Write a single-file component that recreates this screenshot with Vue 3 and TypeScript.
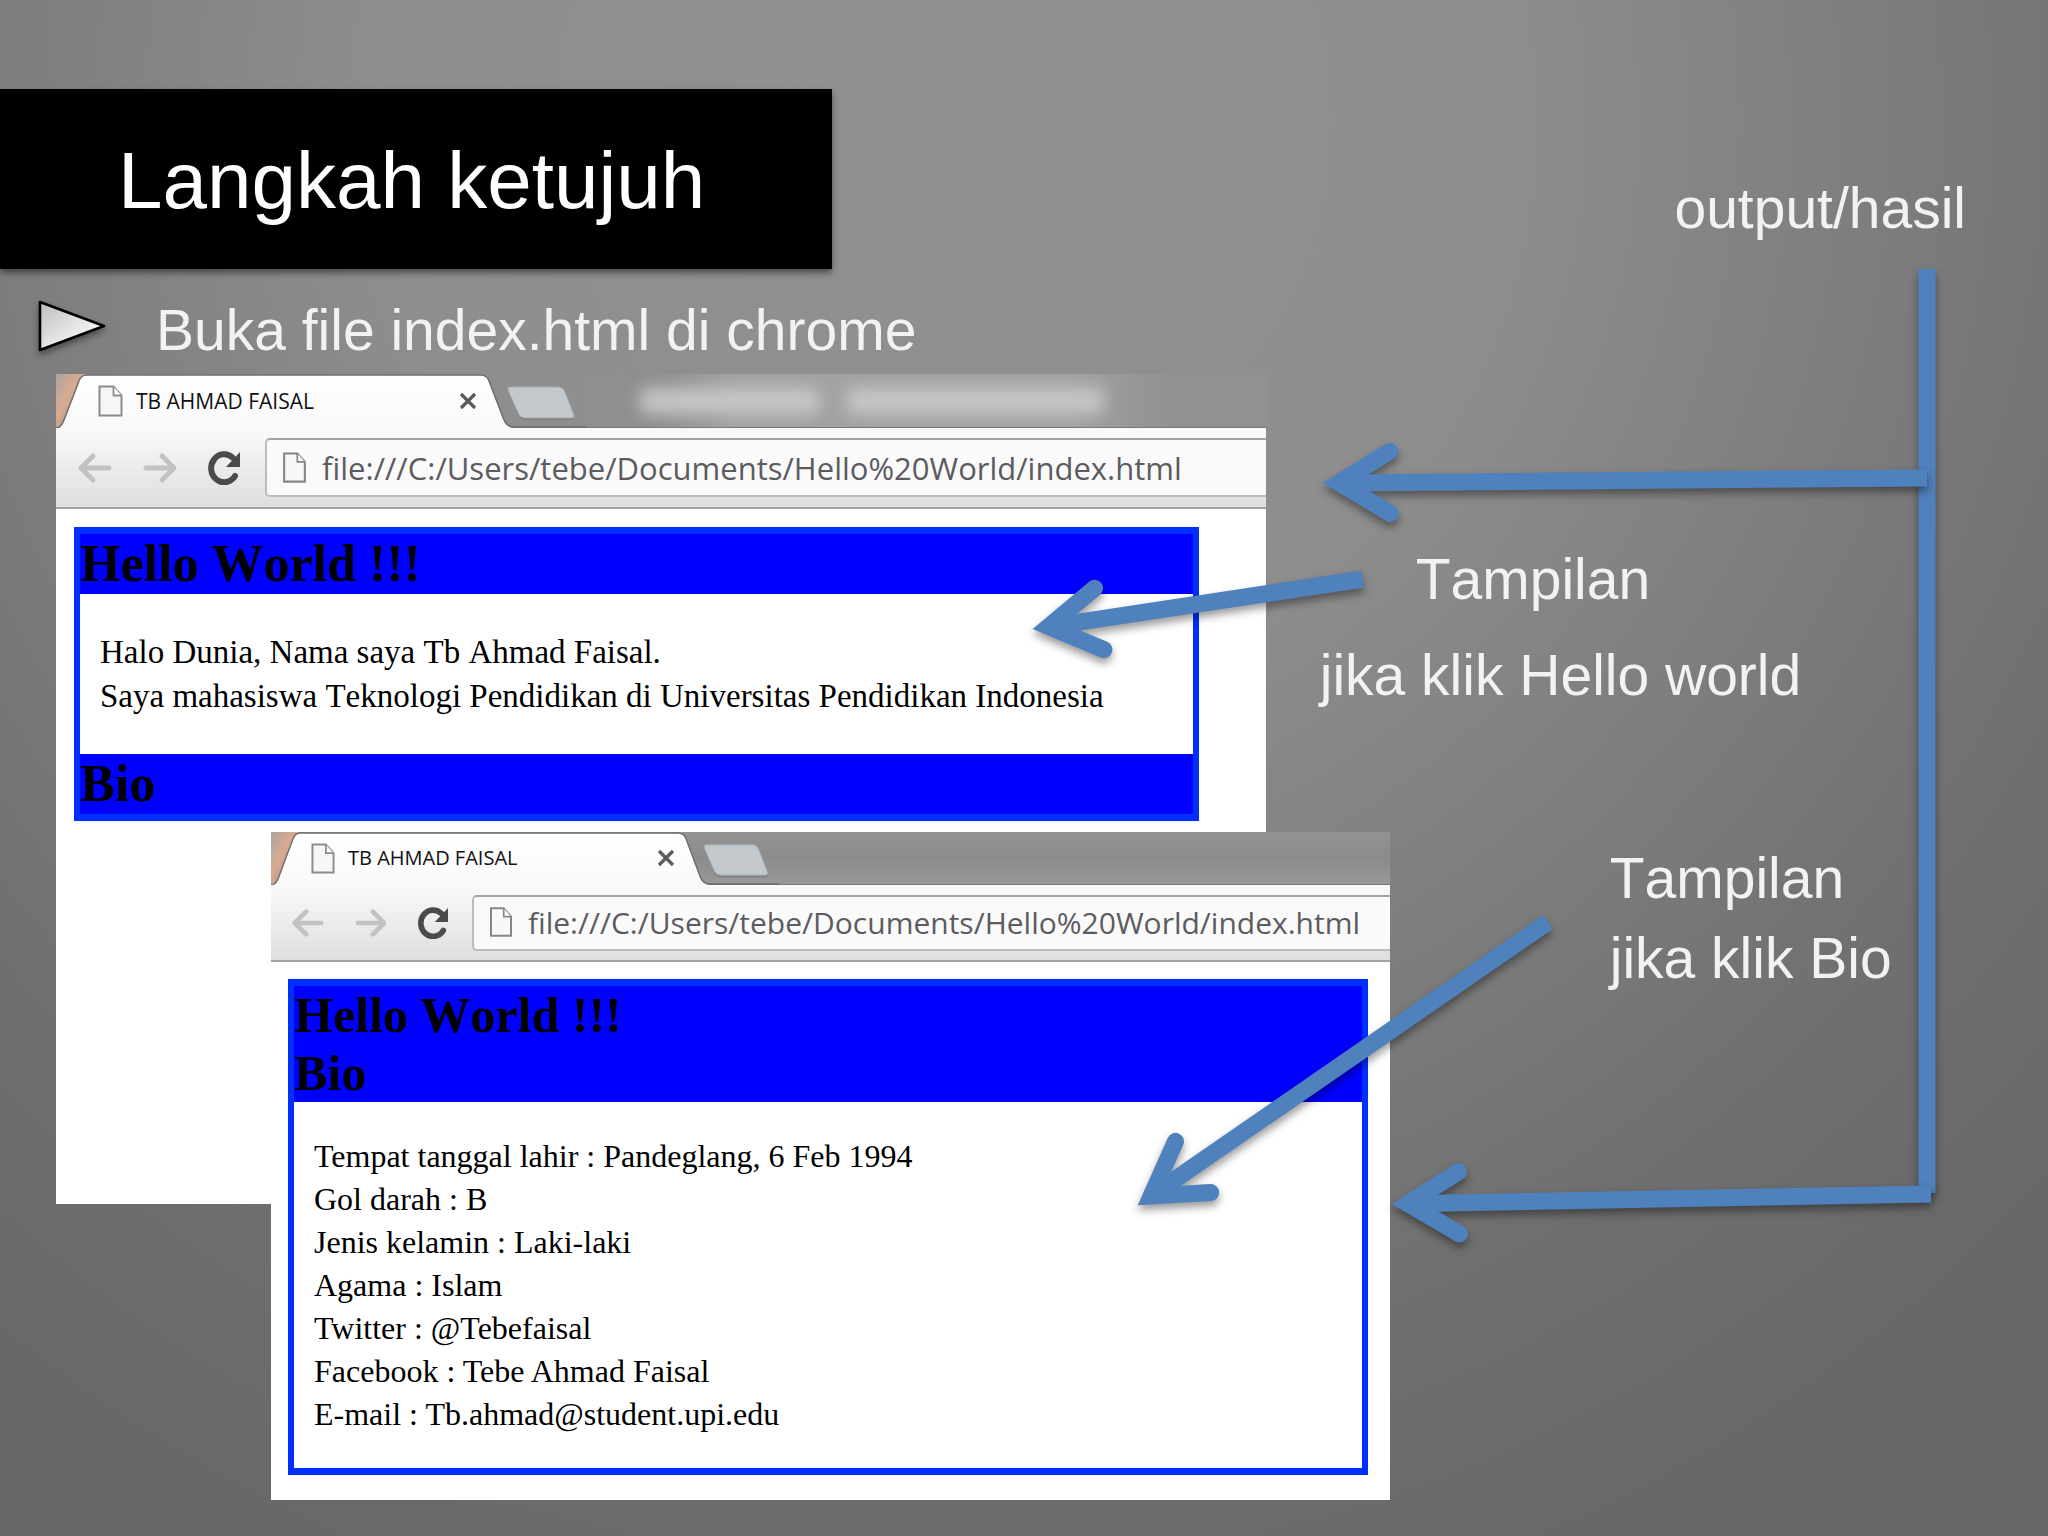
<script setup lang="ts">
interface Point { x: number; y: number }
interface Section { title: string; lines: string[] }
interface Shot { id: string; size: string; tabTitle: string; url: string; haze: boolean; sections: Section[] }

const shots: Shot[] = [
  {
    id: 'hello',
    size: 'large',
    tabTitle: 'TB AHMAD FAISAL',
    url: 'file:///C:/Users/tebe/Documents/Hello%20World/index.html',
    haze: true,
    sections: [
      {
        title: 'Hello World !!!',
        lines: [
          'Halo Dunia, Nama saya Tb Ahmad Faisal.',
          'Saya mahasiswa Teknologi Pendidikan di Universitas Pendidikan Indonesia',
        ],
      },
      { title: 'Bio', lines: [] },
    ],
  },
  {
    id: 'bio',
    size: 'small',
    tabTitle: 'TB AHMAD FAISAL',
    url: 'file:///C:/Users/tebe/Documents/Hello%20World/index.html',
    haze: false,
    sections: [
      { title: 'Hello World !!!', lines: [] },
      {
        title: 'Bio',
        lines: [
          'Tempat tanggal lahir : Pandeglang, 6 Feb 1994',
          'Gol darah : B',
          'Jenis kelamin : Laki-laki',
          'Agama : Islam',
          'Twitter : @Tebefaisal',
          'Facebook : Tebe Ahmad Faisal',
          'E-mail : Tb.ahmad@student.upi.edu',
        ],
      },
    ],
  },
]

// Builds the shaft and the open head of an arrow that points from `from` to `tip`.
function arrow(from: Point, tip: Point) {
  const length = Math.hypot(from.x - tip.x, from.y - tip.y)
  const dx = (from.x - tip.x) / length
  const dy = (from.y - tip.y) / length
  const at = (along: number, side: number) =>
    `${(tip.x + dx * along - dy * side).toFixed(1)} ${(tip.y + dy * along + dx * side).toFixed(1)}`
  return {
    shaft: `M${from.x} ${from.y} L${at(18, 0)}`,
    head: `M${at(67, 31)} L${at(16, 0)} L${at(67, -31)}`,
  }
}

const arrows = [
  arrow({ x: 1927, y: 478 }, { x: 1323, y: 483 }),
  arrow({ x: 1363, y: 579 }, { x: 1033, y: 629 }),
  arrow({ x: 1548, y: 922 }, { x: 1138, y: 1205 }),
  arrow({ x: 1931, y: 1194 }, { x: 1392, y: 1204 }),
]
</script>

<template>
  <main class="slide">
    <div class="main-column">
      <header class="banner">
        <h1>Langkah ketujuh</h1>
      </header>

      <div class="step">
        <svg class="bullet" viewBox="0 0 70 64" aria-hidden="true">
          <defs>
            <linearGradient id="bulletFill" x1="0" y1="0" x2="1" y2="1">
              <stop offset="0" stop-color="#bdbdbd" />
              <stop offset="0.6" stop-color="#ebebeb" />
              <stop offset="1" stop-color="#ffffff" />
            </linearGradient>
          </defs>
          <path d="M2 4 L66 28 L2 52 Z" fill="url(#bulletFill)" stroke="#000" stroke-width="2.6" stroke-linejoin="round" />
        </svg>
        <p>Buka file index.html di chrome</p>
      </div>

      <section v-for="shot in shots" :key="shot.id" class="window" :class="shot.size">
        <div class="strip">
          <svg class="tab-shape" viewBox="0 0 530 54" preserveAspectRatio="none" aria-hidden="true">
            <defs>
              <linearGradient :id="shot.id + 'Left'" x1="0" y1="0" x2="1" y2="1">
                <stop offset="0" stop-color="#a9a4a1" />
                <stop offset="0.4" stop-color="#d9ab90" />
                <stop offset="1" stop-color="#8f8181" />
              </linearGradient>
              <linearGradient :id="shot.id + 'Tab'" x1="0" y1="0" x2="0" y2="1">
                <stop offset="0" stop-color="#ffffff" />
                <stop offset="1" stop-color="#f9f9fa" />
              </linearGradient>
            </defs>
            <path d="M0 0 H30 L8 54 H0 Z" :fill="`url(#${shot.id}Left)`" />
            <path d="M0 54 Q5 54 8 46 L23 7 Q25 1 31 1 H424 Q431 1 433 7 L448 46 Q451 54 458 54 Z" :fill="`url(#${shot.id}Tab)`" />
            <path d="M0 54 Q5 54 8 46 L23 7 Q25 1 31 1 H424 Q431 1 433 7 L448 46 Q451 53 458 53 H530" fill="none" stroke="#6e6e70" stroke-width="1.5" />
            <path d="M454 14 H502 Q507 14 509 19 L518 43 Q519 46 515 46 H470 Q464 46 462 41 L452 17 Q451 14 454 14 Z" fill="#777" opacity="0.7" />
            <path d="M454 13 H502 Q507 13 509 18 L518 41 Q519 44 515 44 H470 Q464 44 462 39 L452 16 Q451 13 454 13 Z" fill="#c2c8cc" stroke="#a5a9ab" />
          </svg>
          <div class="tab">
            <svg class="page-icon" viewBox="0 0 25 32" aria-hidden="true">
              <path d="M1.5 1.5 H15.5 L23.5 10.5 V30.5 H1.5 Z" fill="#f6f6f7" stroke="#8b8b8d" stroke-width="2" />
              <path d="M15.5 1.5 V10.5 H23.5" fill="#fff" stroke="#8b8b8d" stroke-width="1.8" />
            </svg>
            <span class="tab-title">{{ shot.tabTitle }}</span>
            <button class="close" type="button" aria-label="Close tab">
              <svg viewBox="0 0 18 18" aria-hidden="true">
                <path d="M2 2 L16 16 M16 2 L2 16" stroke="#5b5b5b" stroke-width="3.2" />
              </svg>
            </button>
          </div>
          <div v-if="shot.haze" class="haze" aria-hidden="true"><i></i><i></i></div>
        </div>

        <div class="toolbar">
          <button type="button" aria-label="Back">
            <svg viewBox="0 0 34 34" aria-hidden="true">
              <path d="M15 5 L3 17 L15 29 M4 17 H31" fill="none" stroke="#c2c1c3" stroke-width="5" stroke-linecap="round" stroke-linejoin="round" />
            </svg>
          </button>
          <button type="button" aria-label="Forward">
            <svg viewBox="0 0 34 34" aria-hidden="true">
              <path d="M20 5 L32 17 L20 29 M31 17 H4" fill="none" stroke="#c2c1c3" stroke-width="5" stroke-linecap="round" stroke-linejoin="round" />
            </svg>
          </button>
          <button type="button" aria-label="Reload">
            <svg viewBox="0 0 34 34" aria-hidden="true">
              <path d="M29 25 A13 14 0 1 1 27 7" fill="none" stroke="#4b4b4d" stroke-width="6" stroke-linecap="round" />
              <path d="M34 1 V16 H20 Z" fill="#4b4b4d" />
            </svg>
          </button>
          <div class="address">
            <svg class="page-icon" viewBox="0 0 25 34" aria-hidden="true">
              <path d="M1.5 1.5 H15.5 L23.5 10.5 V31.5 H1.5 Z" fill="#f8f8f9" stroke="#858587" stroke-width="2.2" />
              <path d="M15.5 1.5 V10.5 H23.5" fill="#fff" stroke="#858587" stroke-width="1.8" />
            </svg>
            <input type="text" :value="shot.url" aria-label="Address" spellcheck="false" />
          </div>
        </div>

        <div class="page">
          <div class="accordion">
            <template v-for="section in shot.sections" :key="section.title">
              <h2><button type="button">{{ section.title }}</button></h2>
              <div v-if="section.lines.length" class="panel">
                <p v-for="line in section.lines" :key="line">{{ line }}</p>
              </div>
            </template>
          </div>
        </div>
      </section>
    </div>

    <aside class="notes">
      <p class="note result">output/hasil</p>
      <p class="note hello-note">Tampilan<br />jika klik Hello world</p>
      <p class="note bio-note">Tampilan<br />jika klik Bio</p>
    </aside>

    <svg class="arrows" viewBox="0 0 2048 1536" aria-hidden="true">
      <g class="line"><path d="M1927 269 V1193" /></g>
      <g v-for="(item, index) in arrows" :key="index" class="line">
        <path :d="item.shaft" />
        <path :d="item.head" stroke-linecap="round" stroke-linejoin="miter" />
      </g>
    </svg>
  </main>
</template>

<style>
body {
  margin: 0;
  background: #696869;
}
</style>

<style scoped>
.slide {
  position: relative;
  display: grid;
  grid-template-columns: 62fr 38fr;
  align-items: start;
  min-height: 100vh;
  box-sizing: border-box;
  overflow: hidden;
  background: radial-gradient(ellipse 68% 92% at 46% 8%, #909090 0%, #8e8e8e 40%, #7f7e7f 66%, #706f70 90%, #696869 110%);
  font-family: "Liberation Sans", Arial, sans-serif;
  font-kerning: none;
}

h1,
h2,
p {
  margin: 0;
}

button {
  padding: 0;
  border: 0;
  background: none;
  color: inherit;
  font: inherit;
  font-kerning: inherit;
  text-align: left;
}

svg {
  display: block;
}

.main-column {
  min-width: 0;
  padding: 89px 0 36px;
}

.banner {
  width: 65.5%;
  padding: 47px 0 43px 118px;
  box-sizing: border-box;
  background: #000;
  box-shadow: 0 4px 6px rgba(0, 0, 0, 0.45);
}

h1 {
  color: #fff;
  font-size: 80px;
  font-weight: 400;
  line-height: 90px;
  white-space: nowrap;
}

.step {
  display: flex;
  align-items: center;
  gap: 48px;
  margin: 29px 0 12px 38px;
}

.step p,
.note {
  color: #f3f2f3;
  font-size: 57px;
  line-height: 64px;
  white-space: nowrap;
}

.bullet {
  width: 70px;
  height: 64px;
  filter: drop-shadow(0 4px 3px rgba(0, 0, 0, 0.4));
}

/* Browser windows */
.window {
  background: #fff;
}

.large {
  margin: 0 4px 0 56px;
  padding-bottom: 383px;
}

.small {
  position: relative;
  margin: -372px -120px 0 271px;
  padding-bottom: 25px;
}

.strip {
  position: relative;
  display: flex;
  align-items: center;
  height: 54px;
  border-bottom: 1px solid #77777a;
  box-sizing: border-box;
  background: linear-gradient(#929292, #8b8b8c 50%, #98989a);
}

.large .strip {
  background: linear-gradient(90deg, #8c8c8c, #8f8f8f 50%, #a2a2a2 56%, #a2a2a2 84%, #919191 92%);
}

.small .strip {
  height: 53px;
}

.tab-shape {
  position: absolute;
  left: 0;
  top: 0;
  width: 530px;
  height: 54px;
}

.small .tab-shape {
  width: 508px;
  height: 53px;
}

.tab {
  position: relative;
  display: flex;
  align-items: center;
  width: 421px;
  padding-left: 42px;
  box-sizing: border-box;
}

.small .tab {
  width: 404px;
  padding-left: 40px;
}

.page-icon {
  flex: none;
  width: 25px;
  height: 32px;
}

.small .page-icon {
  width: 24px;
  height: 31px;
}

.tab-title {
  flex: 1;
  margin-left: 13px;
  color: #111;
  font-family: "Open Sans", "Noto Sans", sans-serif;
  font-size: 21px;
  font-kerning: normal;
  line-height: 28px;
  white-space: nowrap;
}

.small .tab-title {
  font-size: 20px;
}

.close,
.close svg {
  width: 18px;
  height: 18px;
}

.haze {
  display: flex;
  flex: 1;
  gap: 26px;
  margin: 0 162px 0 163px;
}

.haze i {
  flex: 7;
  height: 26px;
  border-radius: 8px;
  background: #c6c6c6;
  filter: blur(8px);
}

.haze i:last-child {
  flex: 10;
}

.toolbar {
  display: flex;
  align-items: center;
  gap: 30px;
  height: 81px;
  padding-left: 22px;
  border-bottom: 2px solid #a3a2a4;
  box-sizing: border-box;
  background: linear-gradient(#fafafa, #dfdedf);
}

.small .toolbar {
  height: 77px;
  padding-left: 21px;
}

.toolbar button,
.toolbar button svg {
  flex: none;
  width: 34px;
  height: 34px;
}

.small .toolbar button,
.small .toolbar button svg {
  width: 32px;
  height: 32px;
}

.address {
  display: flex;
  flex: 1;
  align-items: center;
  gap: 15px;
  min-width: 0;
  height: 59px;
  margin-left: -5px;
  padding-left: 15px;
  border: 2px solid #bcbbbd;
  border-top-color: #a3a2a4;
  border-right: 0;
  border-radius: 5px 0 0 5px;
  box-sizing: border-box;
  background: #fafafb;
}

.small .address {
  height: 56px;
  margin-left: -6px;
}

.address input {
  flex: 1;
  min-width: 0;
  padding: 0;
  border: 0;
  outline: 0;
  background: transparent;
  color: #5c5c60;
  font-family: "Open Sans", "Noto Sans", sans-serif;
  font-size: 31px;
  line-height: 44px;
}

.small .address input {
  font-size: 30px;
}

/* Web page shown inside each window */
.page {
  padding: 18px 67px 0 18px;
}

.small .page {
  padding: 17px 22px 0 17px;
}

.accordion {
  border: solid #0030ff;
  border-width: 7px 6px;
  color: #000;
  font-family: "Liberation Serif", "Times New Roman", serif;
}

h2 {
  background: #0000ff;
  font-size: 52px;
  font-weight: 700;
  line-height: 60px;
}

h2 button {
  display: block;
  width: 100%;
}

.small h2 {
  font-size: 50px;
  line-height: 58px;
}

.panel {
  padding: 36px 20px;
  font-size: 33px;
  line-height: 44px;
}

.small .panel {
  padding: 33px 20px 32px;
  font-size: 32px;
  font-kerning: normal;
  line-height: 43px;
}

/* Captions */
.notes {
  padding: 176px 82px 0 50px;
}

.result {
  text-align: right;
}

.hello-note {
  margin-top: 291px;
  line-height: 96px;
  text-indent: 96px;
}

.bio-note {
  margin: 115px 0 0 290px;
  line-height: 80px;
}

.arrows {
  position: absolute;
  left: 0;
  top: 0;
  width: 100%;
  height: auto;
  pointer-events: none;
}

.line {
  fill: none;
  stroke: #4f81bd;
  stroke-width: 17px;
  filter: drop-shadow(0 5px 4px rgba(0, 0, 0, 0.4));
}
</style>
